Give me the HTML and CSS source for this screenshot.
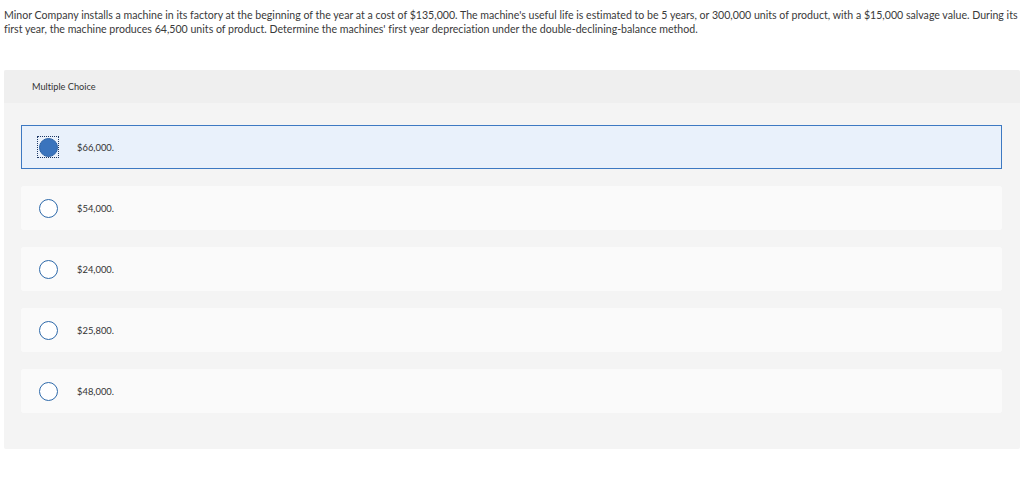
FILE: index.html
```html
<!DOCTYPE html>
<html>
<head>
<meta charset="utf-8">
<link rel="stylesheet" href="styles.css">
</head>
<body>
<p class="question">Minor Company installs a machine in its factory at the beginning of the year at a cost of $135,000. The machine's useful life is estimated to be 5 years, or 300,000 units of product, with a $15,000 salvage value. During its first year, the machine produces 64,500 units of product. Determine the machines' first year depreciation under the double-declining-balance method.</p>
<div class="mc">
  <div class="mc-head">Multiple Choice</div>
  <div class="mc-body">
    <div class="opt selected"><span class="radio-wrap"><span class="radio"></span></span><span class="label">$66,000.</span></div>
    <div class="opt"><span class="radio-wrap"><span class="radio"></span></span><span class="label">$54,000.</span></div>
    <div class="opt"><span class="radio-wrap"><span class="radio"></span></span><span class="label">$24,000.</span></div>
    <div class="opt"><span class="radio-wrap"><span class="radio"></span></span><span class="label">$25,800.</span></div>
    <div class="opt"><span class="radio-wrap"><span class="radio"></span></span><span class="label">$48,000.</span></div>
  </div>
</div>
</body>
</html>
```
FILE: styles.css
```css
html, body { margin: 0; padding: 0; background: #fff; }
body {
  font-family: Lato, "Open Sans", "Liberation Sans", sans-serif;
  font-variant-ligatures: none;
  color: #333;
  padding: 0 4px 0 4px;
}
.question {
  margin: 0;
  padding-top: 8px;
  font-size: 10.6px;
  line-height: 14px;
  color: #3a3a3a;
  width: 1021px;
}
.mc {
  margin-top: 34px;
  width: 1016px;
  background: #f4f4f4;
  border-radius: 2px;
}
.mc-head {
  background: #efefef;
  height: 33px;
  display: flex;
  align-items: center;
  padding-left: 28px;
  font-size: 9.2px;
  color: #333;
  border-radius: 2px 2px 0 0;
}
.mc-body {
  padding: 22px 18px 36px 17px;
  display: flex;
  flex-direction: column;
  gap: 17px;
}
.opt {
  height: 44px;
  background: #fafafa;
  display: flex;
  align-items: center;
  border-radius: 2px;
  box-sizing: border-box;
  border: 1px solid #fafafa;
}
.opt.selected {
  background: #e9f1fb;
  border: 1px solid #3d79c2;
  border-radius: 0;
}
.radio-wrap {
  width: 20px;
  height: 20px;
  margin-left: 16px;
  display: flex;
  align-items: center;
  justify-content: center;
  box-sizing: border-box;
}
.selected .radio-wrap {
  outline: 1px dotted #1f3a66;
}
.radio {
  width: 19px;
  height: 19px;
  border-radius: 50%;
  border: 1.3px solid #2d69aa;
  box-sizing: border-box;
  background: #fff;
}
.selected .radio {
  background: #3a74bd;
  border-color: #2d63a6;
}
.label {
  margin-left: 19px;
  font-size: 9.4px;
  color: #333;
}
```
